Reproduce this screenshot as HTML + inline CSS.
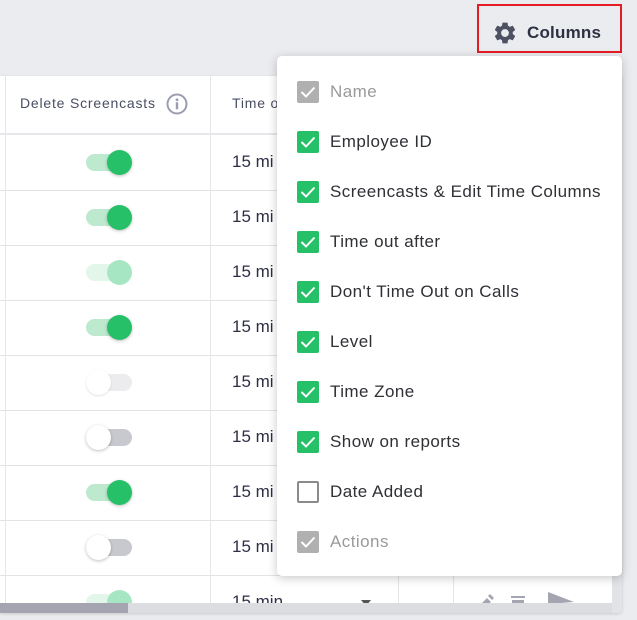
<!DOCTYPE html>
<html><head><meta charset="utf-8"><style>
*{box-sizing:border-box;margin:0;padding:0}
body{width:637px;height:620px;background:#ebecf0;position:relative;overflow:hidden;font-family:"Liberation Sans",Roboto,sans-serif}
.card{position:absolute;left:0;top:76px;width:622px;height:537px;background:#fff;box-shadow:0 1px 3px rgba(0,0,0,.15);border-radius:0 0 4px 0;overflow:hidden}
.vl{position:absolute;top:0;bottom:10px;width:1px;background:#e6e6e8}
.hl{position:absolute;left:0;right:10px;height:1px;background:#e3e3e6}
.hd{position:absolute;top:19px;font-size:14px;color:#4a4e63;letter-spacing:.8px}
.tg{position:absolute;left:86px;width:46px;height:17px;border-radius:9px}
.th{position:absolute;top:-4px;width:25px;height:25px;border-radius:50%;box-shadow:0 1px 3px rgba(0,0,0,.25)}
.mn{position:absolute;left:232px;font-size:17px;color:#2d2f45}
.menu{position:absolute;left:277px;top:56px;width:345px;height:520px;background:#fff;border-radius:5px;box-shadow:0 2px 10px rgba(0,0,0,.22)}
.it{position:absolute;left:20px;height:22px;display:flex;align-items:center;font-size:17px;color:#2f3035;letter-spacing:.45px}
.cb{width:22px;height:22px;border-radius:2px;background:#25c068;margin-right:11px;display:flex;align-items:center;justify-content:center}
.cb.g{background:#b0b0b0}
.cb.e{background:#fff;border:2px solid #8a8a8a}
.it.d{color:#9a9a9a}
</style></head><body>
<div class="card">
<div class="vl" style="left:5px"></div>
<div class="vl" style="left:210px"></div>
<div class="vl" style="left:398px"></div>
<div class="vl" style="left:453px"></div>
<div class="hd" style="left:20px">Delete Screencasts</div>
<svg style="position:absolute;left:166px;top:17px" width="22" height="22" viewBox="0 0 22 22"><circle cx="11" cy="11" r="9.5" fill="none" stroke="#9a9db0" stroke-width="2"/><circle cx="11" cy="6.8" r="1.4" fill="#9a9db0"/><rect x="9.8" y="9.3" width="2.4" height="7" fill="#9a9db0"/></svg>
<div class="hd" style="left:232px">Time o</div>
<div class="hl" style="top:57px;height:2px;background:#e6e7ea"></div>
<div class="hl" style="top:114px"></div>
<div class="hl" style="top:169px"></div>
<div class="hl" style="top:224px"></div>
<div class="hl" style="top:279px"></div>
<div class="hl" style="top:334px"></div>
<div class="hl" style="top:389px"></div>
<div class="hl" style="top:444px"></div>
<div class="hl" style="top:499px"></div>

<div class="tg" style="top:78px;background:#bde9cf"><div class="th" style="left:21px;background:#25c068"></div></div>
<div class="tg" style="top:133px;background:#bde9cf"><div class="th" style="left:21px;background:#25c068"></div></div>
<div class="tg" style="top:188px;background:#e2f6ea"><div class="th" style="left:21px;background:#a7e6c3;box-shadow:none"></div></div>
<div class="tg" style="top:243px;background:#bde9cf"><div class="th" style="left:21px;background:#25c068"></div></div>
<div class="tg" style="top:298px;background:#ececee"><div class="th" style="left:0;background:#fff;box-shadow:0 1px 2px rgba(0,0,0,.12)"></div></div>
<div class="tg" style="top:353px;background:#c8c9cf"><div class="th" style="left:0;background:#fff"></div></div>
<div class="tg" style="top:408px;background:#bde9cf"><div class="th" style="left:21px;background:#25c068"></div></div>
<div class="tg" style="top:463px;background:#c8c9cf"><div class="th" style="left:0;background:#fff"></div></div>
<div class="tg" style="top:518px;background:#e2f6ea"><div class="th" style="left:21px;background:#a7e6c3;box-shadow:none"></div></div>

<div class="mn" style="top:76px">15 mi</div>
<div class="mn" style="top:131px">15 mi</div>
<div class="mn" style="top:186px">15 mi</div>
<div class="mn" style="top:241px">15 mi</div>
<div class="mn" style="top:296px">15 mi</div>
<div class="mn" style="top:351px">15 mi</div>
<div class="mn" style="top:406px">15 mi</div>
<div class="mn" style="top:461px">15 mi</div>
<div class="mn" style="top:516px">15 min</div>
<div style="position:absolute;left:361px;top:524px;border:5px solid transparent;border-top:6px solid #555"></div>
<svg style="position:absolute;left:475px;top:514px" width="60" height="20"><path d="M2 18 L12 8 L16 12 L6 20Z M13 6 L15 4 L19 8 L17 10Z" fill="#a3a5b0"/><rect x="36" y="6" width="14" height="2" fill="#a3a5b0"/><rect x="37" y="10" width="12" height="10" fill="#a3a5b0"/></svg>
<svg style="position:absolute;left:546px;top:516px" width="30" height="12"><path d="M2 0 L28 10 L2 12Z" fill="#a3a5b0"/></svg>

<div style="position:absolute;left:0;top:527px;width:612px;height:10px;background:#dcdde1"></div>
<div style="position:absolute;left:0;top:527px;width:128px;height:10px;background:#a4a5b0"></div>
<div style="position:absolute;left:612px;top:0;width:10px;height:537px;background:#e2e3e6"></div>
</div>

<div style="position:absolute;left:477px;top:4px;width:145px;height:49px;border:2px solid #e51c24"></div>
<svg style="position:absolute;left:492px;top:20px" width="26" height="26" viewBox="0 0 24 24"><path fill="#4e5163" d="M19.14 12.94c.04-.3.06-.61.06-.94 0-.32-.02-.64-.07-.94l2.030-1.58a.49.49 0 0 0 .12-.61l-1.92-3.32a.49.49 0 0 0-.59-.22l-2.39.96c-.5-.38-1.030-.7-1.62-.94l-.36-2.54a.48.48 0 0 0-.48-.41h-3.84c-.24 0-.43.17-.47.41l-.36 2.54c-.59.24-1.13.57-1.62.94l-2.39-.96a.49.49 0 0 0-.59.22L2.74 8.87c-.12.21-.08.47.12.61l2.030 1.58c-.05.3-.09.63-.09.94s.02.64.07.94l-2.030 1.58a.49.49 0 0 0-.12.61l1.92 3.32c.12.22.37.29.59.22l2.39-.96c.5.38 1.030.7 1.62.94l.36 2.54c.05.24.24.41.48.41h3.84c.24 0 .44-.17.47-.41l.36-2.54c.59-.24 1.13-.56 1.62-.94l2.39.96c.22.08.47 0 .59-.22l1.92-3.32c.12-.22.07-.47-.12-.61l-2.010-1.58zM12 15.6c-1.98 0-3.6-1.62-3.6-3.6s1.62-3.6 3.6-3.6 3.6 1.62 3.6 3.6-1.62 3.6-3.6 3.6z"/></svg>
<div style="position:absolute;left:527px;top:23px;font-size:17px;font-weight:bold;color:#2d3142;letter-spacing:.2px">Columns</div>

<div class="menu">
<div class="it d" style="top:25px"><div class="cb g"><svg width="16" height="12"><path d="M1.5 6 L6 10.5 L14.5 1.5" stroke="#fff" stroke-width="2" fill="none"/></svg></div>Name</div>
<div class="it" style="top:75px"><div class="cb"><svg width="16" height="12"><path d="M1.5 6 L6 10.5 L14.5 1.5" stroke="#fff" stroke-width="2" fill="none"/></svg></div>Employee ID</div>
<div class="it" style="top:125px"><div class="cb"><svg width="16" height="12"><path d="M1.5 6 L6 10.5 L14.5 1.5" stroke="#fff" stroke-width="2" fill="none"/></svg></div>Screencasts &amp; Edit Time Columns</div>
<div class="it" style="top:175px"><div class="cb"><svg width="16" height="12"><path d="M1.5 6 L6 10.5 L14.5 1.5" stroke="#fff" stroke-width="2" fill="none"/></svg></div>Time out after</div>
<div class="it" style="top:225px"><div class="cb"><svg width="16" height="12"><path d="M1.5 6 L6 10.5 L14.5 1.5" stroke="#fff" stroke-width="2" fill="none"/></svg></div>Don't Time Out on Calls</div>
<div class="it" style="top:275px"><div class="cb"><svg width="16" height="12"><path d="M1.5 6 L6 10.5 L14.5 1.5" stroke="#fff" stroke-width="2" fill="none"/></svg></div>Level</div>
<div class="it" style="top:325px"><div class="cb"><svg width="16" height="12"><path d="M1.5 6 L6 10.5 L14.5 1.5" stroke="#fff" stroke-width="2" fill="none"/></svg></div>Time Zone</div>
<div class="it" style="top:375px"><div class="cb"><svg width="16" height="12"><path d="M1.5 6 L6 10.5 L14.5 1.5" stroke="#fff" stroke-width="2" fill="none"/></svg></div>Show on reports</div>
<div class="it" style="top:425px"><div class="cb e"></div>Date Added</div>
<div class="it d" style="top:475px"><div class="cb g"><svg width="16" height="12"><path d="M1.5 6 L6 10.5 L14.5 1.5" stroke="#fff" stroke-width="2" fill="none"/></svg></div>Actions</div>
</div>
</body></html>
